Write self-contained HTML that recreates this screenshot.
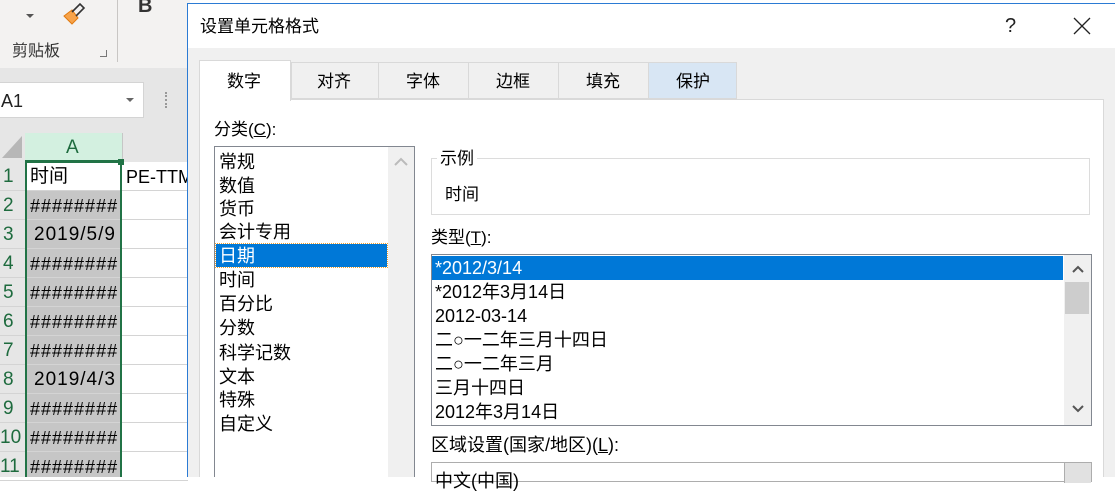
<!DOCTYPE html>
<html><head><meta charset="utf-8"><style>
*{margin:0;padding:0;box-sizing:border-box}
body{width:1115px;height:477px;overflow:hidden;position:relative;background:#fff;font-family:"Liberation Sans","Noto Sans CJK SC",sans-serif;color:#000}
.a{position:absolute}
.t{position:absolute;font-size:17px;line-height:24px;white-space:nowrap}
</style></head><body>
<div class="a" style="left:0;top:0;width:190px;height:68px;background:#f3f2f1"></div>
<div class="a" style="left:117px;top:0;width:1px;height:62px;background:#c8c6c4"></div>
<div class="a" style="left:26px;top:14px;width:0;height:0;border-left:4px solid transparent;border-right:4px solid transparent;border-top:4px solid #555"></div>
<svg class="a" style="left:60px;top:2px" width="26" height="26" viewBox="0 0 26 26"><path d="M4 14 L12 8 L18 16 L12 22 Z" fill="#f7a34a" stroke="#e07a10"/><path d="M12 10 L20 2 L24 6 L16 14" fill="none" stroke="#333" stroke-width="1.6"/></svg>
<div class="t" style="left:12px;top:40px;font-size:16px;color:#333">剪贴板</div>
<div class="a" style="left:100px;top:50px;width:7px;height:7px;border-right:1px solid #777;border-bottom:1px solid #777"></div>
<div class="t" style="left:138px;top:-6px;font-size:20px;font-weight:bold;color:#333">B</div>
<div class="a" style="left:0;top:68px;width:190px;height:65px;background:#e6e6e6"></div>
<div class="a" style="left:0;top:82px;width:144px;height:36px;background:#fff;border:1px solid #d4d4d4;border-left:none"></div>
<div class="t" style="left:1px;top:89px;font-size:18px;color:#222">A1</div>
<div class="a" style="left:126px;top:98px;border-left:4px solid transparent;border-right:4px solid transparent;border-top:4px solid #666"></div>
<div class="a" style="left:165px;top:92px;width:2px;height:16px;border-left:2px dotted #999"></div>
<div class="a" style="left:0;top:133px;width:188px;height:344px;background:#fff"></div>
<div class="a" style="left:0;top:133px;width:25px;height:344px;background:#e6e6e6"></div>
<div class="a" style="left:2px;top:136px;width:0;height:0;border-left:20px solid transparent;border-bottom:22px solid #b7b7b7"></div>
<div class="a" style="left:25px;top:133px;width:97px;height:29px;background:#d3f0e0;border-bottom:2px solid #217346"></div>
<div class="t" style="left:66px;top:136px;font-size:19px;color:#1e6b3e">A</div>
<div class="a" style="left:122px;top:133px;width:66px;height:29px;background:#e6e6e6;border-left:1px solid #c6c6c6"></div>
<div class="a" style="left:25px;top:162px;width:97px;height:315px;background:#c6c6c6"></div>
<div class="a" style="left:25px;top:162px;width:97px;height:29px;background:#fff"></div>
<div id="rows"></div>
<div class="a" style="left:25px;top:161px;width:2px;height:316px;background:#217346"></div>
<div class="a" style="left:120px;top:161px;width:2px;height:316px;background:#217346"></div>
<div class="a" style="left:25px;top:161px;width:97px;height:2px;background:#217346"></div>
<div class="a" style="left:118px;top:159px;width:6px;height:6px;background:#217346"></div>
<div class="t" style="left:30px;top:165px;font-size:19px">时间</div>
<div class="t" style="left:126px;top:165px;font-size:18px">PE-TTM</div>
<div class="a" style="left:187px;top:3px;width:928px;height:474px;background:#f0f0f0;border-left:1px solid #2b7bd4;border-top:1px solid #2b7bd4"></div>
<div class="a" style="left:188px;top:4px;width:927px;height:44px;background:#fff"></div>
<div class="t" style="left:200px;top:15px;font-size:17px">设置单元格格式</div>
<div class="t" style="left:1005px;top:14px;font-size:20px;color:#222">?</div>
<svg class="a" style="left:1073px;top:17px" width="18" height="18"><path d="M1 1L17 17M17 1L1 17" stroke="#222" stroke-width="1.3"/></svg>
<div class="a" style="left:291px;top:62px;width:446px;height:37px;background:#f0f0f0;border:1px solid #d9d9d9"></div>
<div class="a" style="left:378px;top:62px;width:1px;height:37px;background:#d9d9d9"></div>
<div class="a" style="left:468px;top:62px;width:1px;height:37px;background:#d9d9d9"></div>
<div class="a" style="left:558px;top:62px;width:1px;height:37px;background:#d9d9d9"></div>
<div class="a" style="left:648px;top:62px;width:89px;height:37px;background:#d8e6f4;border:1px solid #d9d9d9"></div>
<div class="a" style="left:199px;top:99px;width:905px;height:378px;background:#fff;border:1px solid #d9d9d9;border-bottom:none"></div>
<div class="a" style="left:199px;top:60px;width:92px;height:41px;background:#fff;border:1px solid #d9d9d9;border-bottom:none"></div>
<div class="t" style="left:227px;top:70px">数字</div>
<div class="t" style="left:317px;top:70px">对齐</div>
<div class="t" style="left:406px;top:70px">字体</div>
<div class="t" style="left:496px;top:70px">边框</div>
<div class="t" style="left:586px;top:70px">填充</div>
<div class="t" style="left:676px;top:70px">保护</div>
<div class="t" style="left:214px;top:118px">分类(<u>C</u>):</div>
<div class="a" style="left:214px;top:146px;width:201px;height:331px;border:1px solid #828790;border-bottom:none;background:#fff"></div>
<div class="a" style="left:388px;top:147px;width:26px;height:330px;background:#f0f0f0"></div>
<svg class="a" style="left:394px;top:157px" width="14" height="10"><path d="M1 8L7 2L13 8" stroke="#bbb" stroke-width="2" fill="none"/></svg>
<div class="a" style="left:216px;top:244px;width:171px;height:23px;background:#0078d7;outline:1px dotted #f0a030"></div>
<div class="t" style="left:219px;top:150px;font-size:18px">常规</div>
<div class="t" style="left:219px;top:174px;font-size:18px">数值</div>
<div class="t" style="left:219px;top:197px;font-size:18px">货币</div>
<div class="t" style="left:219px;top:220px;font-size:18px">会计专用</div>
<div class="t" style="left:219px;top:244px;color:#fff;font-size:18px">日期</div>
<div class="t" style="left:219px;top:268px;font-size:18px">时间</div>
<div class="t" style="left:219px;top:292px;font-size:18px">百分比</div>
<div class="t" style="left:219px;top:316px;font-size:18px">分数</div>
<div class="t" style="left:219px;top:341px;font-size:18px">科学记数</div>
<div class="t" style="left:219px;top:365px;font-size:18px">文本</div>
<div class="t" style="left:219px;top:388px;font-size:18px">特殊</div>
<div class="t" style="left:219px;top:412px;font-size:18px">自定义</div>
<div class="a" style="left:431px;top:158px;width:659px;height:57px;border:1px solid #dcdcdc"></div>
<div class="t" style="left:437px;top:147px;background:#fff;padding:0 3px;font-size:17px">示例</div>
<div class="t" style="left:445px;top:183px;font-size:17px">时间</div>
<div class="t" style="left:431px;top:226px">类型(<u>T</u>):</div>
<div class="a" style="left:431px;top:254px;width:661px;height:172px;border:1px solid #828790;background:#fff"></div>
<div class="a" style="left:1064px;top:255px;width:27px;height:170px;background:#f0f0f0"></div>
<div class="a" style="left:1065px;top:282px;width:24px;height:32px;background:#cdcdcd"></div>
<svg class="a" style="left:1071px;top:264px" width="14" height="10"><path d="M2 8L7 3L12 8" stroke="#555" stroke-width="2" fill="none"/></svg>
<svg class="a" style="left:1071px;top:404px" width="14" height="10"><path d="M2 2L7 7L12 2" stroke="#555" stroke-width="2" fill="none"/></svg>
<div class="a" style="left:432px;top:256px;width:631px;height:24px;background:#0078d7"></div>
<div class="t" style="left:435px;top:256px;color:#fff;font-size:18px">*2012/3/14</div>
<div class="t" style="left:435px;top:280px;font-size:18px">*2012年3月14日</div>
<div class="t" style="left:435px;top:304px;font-size:18px">2012-03-14</div>
<div class="t" style="left:435px;top:328px;font-size:18px">二○一二年三月十四日</div>
<div class="t" style="left:435px;top:352px;font-size:18px">二○一二年三月</div>
<div class="t" style="left:435px;top:376px;font-size:18px">三月十四日</div>
<div class="t" style="left:435px;top:400px;font-size:18px">2012年3月14日</div>
<div class="t" style="left:431px;top:433px;font-size:18px">区域设置(国家/地区)(<u>L</u>):</div>
<div class="a" style="left:431px;top:462px;width:661px;height:20px;border:1px solid #adadad;background:#fff"></div>
<div class="a" style="left:1064px;top:463px;width:27px;height:20px;background:#e1e1e1;border-left:1px solid #adadad"></div>
<div class="t" style="left:435px;top:469px;font-size:18px">中文(中国)</div>
<script>
var h='',nums=['1','2','3','4','5','6','7','8','9','10','11'];
for(var i=0;i<11;i++){var y=162+i*29;
h+='<div class="t" style="left:'+(i<9?3:0)+'px;top:'+(y+3)+'px;font-size:19px;color:#1e6b3e">'+nums[i]+'</div>';
h+='<div class="a" style="left:0;top:'+(y+28)+'px;width:188px;height:1px;background:#d4d4d4"></div>';
if(i>0){var hash=(i!=2&&i!=7);var txt=hash?'########':(i==2?'2019/5/9':'2019/4/3');
h+='<div class="t" style="left:'+(hash?30:34)+'px;top:'+(y+3)+'px;font-size:'+(hash?18:19)+'px;letter-spacing:1px">'+txt+'</div>';}}
document.getElementById('rows').innerHTML=h;
</script>
</body></html>
